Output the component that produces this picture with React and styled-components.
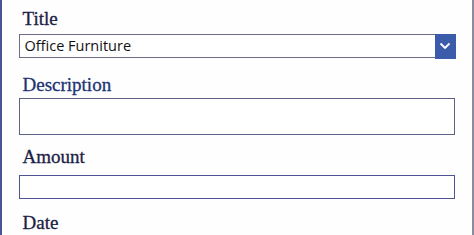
import React from 'react';
import styled, { createGlobalStyle } from 'styled-components';

const GlobalStyle = createGlobalStyle`
  html, body {
    margin: 0;
    padding: 0;
    background: #ffffff;
  }
  * {
    box-sizing: border-box;
  }
`;

const Panel = styled.div`
  width: 474px;
  height: 235px;
  overflow: hidden;
  background: #fefefe;
  border-left: 2.5px solid #4b5394;
  border-right: 2px solid #8a8b9c;
  padding: 7px 17px 0 16.5px;
  display: flex;
  flex-direction: column;
  gap: 13px;
`;

const Field = styled.div`
  display: flex;
  flex-direction: column;
`;

const Label = styled.label`
  font-family: "Liberation Serif", "Times New Roman", serif;
  font-size: 19px;
  line-height: 24px;
  height: 24px;
  padding-left: 4px;
  margin-bottom: ${(p) => p.$gap || 3}px;
  margin-top: ${(p) => p.$shift || 0}px;
  color: ${(p) => p.$color || '#1b2145'};
  -webkit-text-stroke: 0.3px ${(p) => p.$color || '#1b2145'};
`;

const SelectBox = styled.div`
  display: flex;
  align-items: stretch;
  height: 24px;
  border: 1.5px solid #6c6f84;
  background: #fff;
`;

const SelectValue = styled.div`
  flex: 1;
  font-family: "Open Sans", "Noto Sans", sans-serif;
  font-size: 14.5px;
  line-height: 21px;
  color: #111;
  padding-left: 5px;
`;

const SelectButton = styled.div`
  width: 21px;
  margin: -1.5px -1.5px -1.5px 0;
  background: #3b5bab;
  display: flex;
  align-items: center;
  justify-content: center;
`;

const TextArea = styled.div`
  height: 37px;
  border: 1.5px solid #5d6186;
  background: #fff;
`;

const TextInput = styled.div`
  height: 24px;
  border: 1.5px solid #4f5592;
  background: #fff;
`;

const Chevron = () => (
  <svg width="12" height="8" viewBox="0 0 12 8">
    <path d="M1.5 1.5 L6 6 L10.5 1.5" fill="none" stroke="#fff" strokeWidth="1.8" />
  </svg>
);

const App = () => (
  <>
    <GlobalStyle />
    <Panel>
      <Field>
        <Label>Title</Label>
        <SelectBox>
          <SelectValue>Office Furniture</SelectValue>
          <SelectButton>
            <Chevron />
          </SelectButton>
        </SelectBox>
      </Field>
      <Field>
        <Label $color="#1d3372" $shift={2} $gap={1}>Description</Label>
        <TextArea />
      </Field>
      <Field>
        <Label $shift={-3} $gap={6}>Amount</Label>
        <TextInput />
      </Field>
      <Field>
        <Label $shift={-1}>Date</Label>
      </Field>
    </Panel>
  </>
);

export default App;
